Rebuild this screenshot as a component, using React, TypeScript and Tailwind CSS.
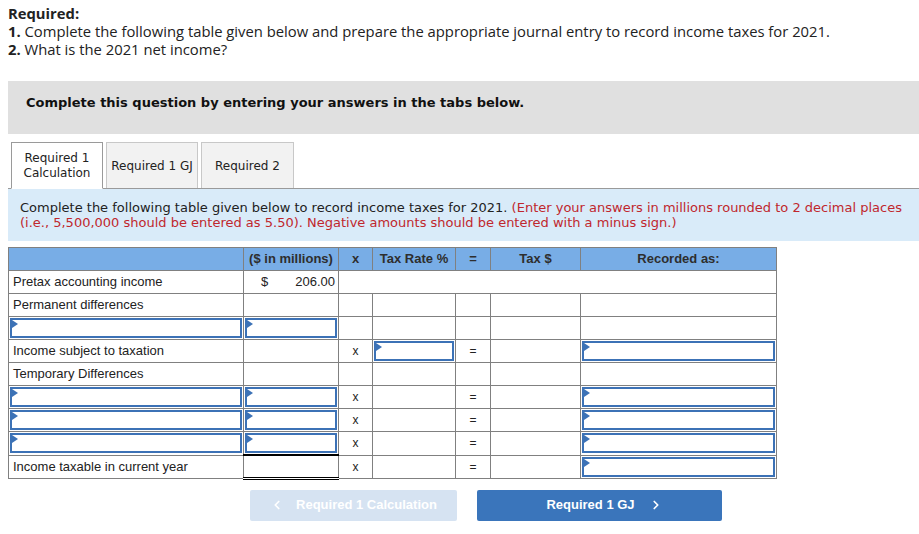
import React from 'react';
import { ChevronLeft, ChevronRight } from 'lucide-react';

const BLUE = 'border-[#3c72b6]';

function Marker() {
  return (
    <span className="absolute left-0 top-0 w-0 h-0 border-t-[4px] border-b-[4px] border-l-[6px] border-t-transparent border-b-transparent border-l-[#3c72b6]" />
  );
}

function InputBox() {
  return (
    <div className={`relative h-[20px] m-[1px] border-2 ${BLUE} bg-white`}>
      <Marker />
    </div>
  );
}

const cell = 'border border-[#808080] p-0 h-[23px] align-middle';

function LabelCell({ text }: { text: string }) {
  return <td className={`${cell} px-[4px]`}>{text}</td>;
}

function InputCell() {
  return (
    <td className={`${cell} p-0`}>
      <InputBox />
    </td>
  );
}

function Empty() {
  return <td className={cell}></td>;
}

function Sym({ s }: { s: string }) {
  return <td className={`${cell} text-center text-[12px]`}>{s}</td>;
}

export default function App() {
  return (
    <div className="w-[919px] h-[534px] bg-white overflow-hidden text-[#222]">
      {/* Requirements */}
      <div className="px-[8px] pt-[4px] font-['Open_Sans',sans-serif] text-[14.8px] leading-[18px] text-[#222]">
        <div className="font-bold">Required:</div>
        <div>
          <span className="font-bold">1.</span> Complete the following table given below and prepare the appropriate journal entry to record income taxes for 2021.
        </div>
        <div>
          <span className="font-bold">2.</span> What is the 2021 net income?
        </div>
      </div>

      {/* Instruction banner */}
      <div className="ml-[8px] mt-[23px] h-[53px] bg-[#e0e0e0] flex items-center pl-[18px] pb-[9px] font-['DejaVu_Sans',sans-serif] text-[13px] font-bold text-[#111]">
        Complete this question by entering your answers in the tabs below.
      </div>

      {/* Tabs */}
      <div className="ml-[8px] mt-[8px] flex items-end gap-[3px] pl-[3px] border-b border-[#9a9a9a] h-[47px] font-['DejaVu_Sans',sans-serif] text-[12px] text-[#222]">
        <div className="w-[92px] h-[47px] -mb-px bg-white border border-[#9a9a9a] border-b-white flex items-center justify-center text-center leading-[15px]">
          Required 1<br />Calculation
        </div>
        <div className="w-[92px] h-[46px] bg-[#f2f2f2] border border-[#c8c8c8] border-b-0 flex items-center justify-center">
          Required 1 GJ
        </div>
        <div className="w-[93px] h-[46px] bg-[#f2f2f2] border border-[#c8c8c8] border-b-0 flex items-center justify-center">
          Required 2
        </div>
      </div>

      {/* Info panel */}
      <div className="ml-[8px] h-[52px] bg-[#d9ebf9] pl-[12px] pr-[8px] pt-[11px] font-['DejaVu_Sans',sans-serif] text-[13px] leading-[15px] text-[#222]">
        Complete the following table given below to record income taxes for 2021.{' '}
        <span className="text-[#c0272d]">
          (Enter your answers in millions rounded to 2 decimal places (i.e., 5,500,000 should be entered as 5.50). Negative amounts should be entered with a minus sign.)
        </span>
      </div>

      {/* Table */}
      <div className="ml-[8px] mt-[6px]">
        <table className="border-collapse table-fixed w-[768px] font-['Liberation_Sans',Arial,sans-serif] text-[13px] text-[#222]">
          <colgroup>
            <col className="w-[235px]" />
            <col className="w-[95px]" />
            <col className="w-[34px]" />
            <col className="w-[83px]" />
            <col className="w-[35px]" />
            <col className="w-[90px]" />
            <col className="w-[196px]" />
          </colgroup>
          <thead>
            <tr className="bg-[#78ade6] text-[#2e2e2e]">
              <th className={`${cell} h-[22px]`}></th>
              <th className={`${cell} h-[22px] text-center font-bold`}>($ in millions)</th>
              <th className={`${cell} h-[22px] text-center font-bold`}>x</th>
              <th className={`${cell} h-[22px] text-center font-bold`}>Tax Rate %</th>
              <th className={`${cell} h-[22px] text-center font-bold`}>=</th>
              <th className={`${cell} h-[22px] text-center font-bold`}>Tax $</th>
              <th className={`${cell} h-[22px] text-center font-bold`}>Recorded as:</th>
            </tr>
          </thead>
          <tbody>
            <tr>
              <LabelCell text="Pretax accounting income" />
              <td className={`${cell} px-[3px]`}>
                <div className="flex justify-between pl-[14px]">
                  <span>$</span>
                  <span>206.00</span>
                </div>
              </td>
              <td className={cell} colSpan={5}></td>
            </tr>
            <tr>
              <LabelCell text="Permanent differences" />
              <Empty />
              <Empty />
              <Empty />
              <Empty />
              <Empty />
              <Empty />
            </tr>
            <tr>
              <InputCell />
              <InputCell />
              <Empty />
              <Empty />
              <Empty />
              <Empty />
              <Empty />
            </tr>
            <tr>
              <LabelCell text="Income subject to taxation" />
              <Empty />
              <Sym s="x" />
              <InputCell />
              <Sym s="=" />
              <Empty />
              <InputCell />
            </tr>
            <tr>
              <LabelCell text="Temporary Differences" />
              <Empty />
              <Empty />
              <Empty />
              <Empty />
              <Empty />
              <Empty />
            </tr>
            {[0, 1, 2].map((i) => (
              <tr key={i}>
                <InputCell />
                <InputCell />
                <Sym s="x" />
                <Empty />
                <Sym s="=" />
                <Empty />
                <InputCell />
              </tr>
            ))}
            <tr>
              <LabelCell text="Income taxable in current year" />
              <td className={`${cell} border-t-2 border-t-black border-b-[3px] border-b-black border-double`}></td>
              <Sym s="x" />
              <Empty />
              <Sym s="=" />
              <Empty />
              <InputCell />
            </tr>
          </tbody>
        </table>
      </div>

      {/* Navigation */}
      <div className="flex gap-[20px] ml-[250px] mt-[10px] font-['Liberation_Sans',Arial,sans-serif] text-[13px] font-bold text-white">
        <button className="w-[207px] h-[31px] rounded-[2px] bg-[#d6e3f2] flex items-center justify-center gap-[12px] text-white">
          <ChevronLeft size={14} strokeWidth={3} />
          <span>Required 1 Calculation</span>
        </button>
        <button className="w-[245px] h-[31px] rounded-[2px] bg-[#3a75bb] flex items-center justify-center gap-[14px] pl-[10px]">
          <span>Required 1 GJ</span>
          <ChevronRight size={14} strokeWidth={3} />
        </button>
      </div>
    </div>
  );
}
